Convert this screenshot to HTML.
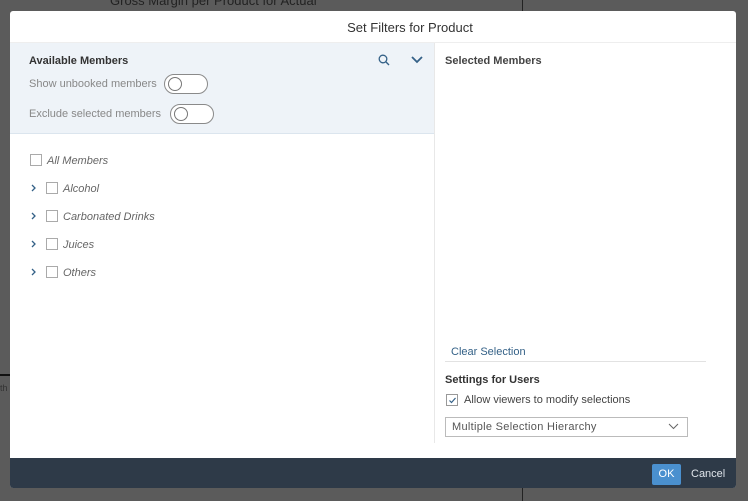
<!DOCTYPE html>
<html><head><meta charset="utf-8"><style>
*{margin:0;padding:0;box-sizing:border-box}
body{width:748px;height:501px;background:#5b5b5b;font-family:"Liberation Sans",sans-serif;position:relative;overflow:hidden}
.abs{position:absolute}
.dlg{left:10px;top:11px;width:726px;height:477px;background:#fff;border-radius:3px;overflow:hidden}
.cb{position:absolute;width:12px;height:12px;border:1px solid #aaa;background:#fff}
.row{position:absolute;font-size:11px;font-style:italic;color:#666}
.tog{position:absolute;width:44px;height:20px;border:1px solid #8a8a8a;border-radius:10px;background:#fff}
.tog:after{content:"";position:absolute;left:3px;top:2px;width:12px;height:12px;border:1.5px solid #777;border-radius:50%}
</style></head><body>
<div class="abs" style="left:110px;top:0;height:9px;overflow:hidden;font-size:13px;color:#222"><div style="margin-top:-7px">Gross Margin per Product for Actual</div></div>
<div class="abs" style="left:522px;top:0;width:1px;height:11px;background:#222"></div>
<div class="abs" style="left:522px;top:488px;width:1px;height:13px;background:#222"></div>
<div class="abs" style="left:0;top:374px;width:10px;height:2px;background:#111"></div>
<div class="abs" style="left:0;top:383px;font-size:9px;color:#333">th</div>
<div class="abs dlg">
 <div class="abs" style="left:0;width:726px;top:9px;text-align:center;font-size:13px;color:#333;padding-left:74px">Set Filters for Product</div>
 <div class="abs" style="left:0;top:31px;width:726px;height:1px;background:#eee"></div>
 <div class="abs" style="left:0;top:32px;width:424px;height:91px;background:#eef3f8;border-bottom:1px solid #dbe5ee"></div>
 <div class="abs" style="left:424px;top:32px;width:1px;height:400px;background:#e8e8e8"></div>
 <div class="abs" style="left:19px;top:44px;font-size:11px;font-weight:bold;color:#333">Available Members</div>
 <svg class="abs" style="left:368px;top:43px" width="12" height="12" viewBox="0 0 12 12"><circle cx="5" cy="5" r="3.8" fill="none" stroke="#346187" stroke-width="1.3"/><line x1="7.8" y1="7.8" x2="11" y2="11" stroke="#346187" stroke-width="1.4"/></svg>
 <svg class="abs" style="left:401px;top:44px" width="12" height="9" viewBox="0 0 12 9"><polyline points="1,2 6,7 11,2" fill="none" stroke="#346187" stroke-width="1.8"/></svg>
 <div class="abs" style="left:19px;top:67px;font-size:11px;color:#888">Show unbooked members</div>
 <div class="tog" style="left:154px;top:63px"></div>
 <div class="abs" style="left:19px;top:97px;font-size:11px;color:#888">Exclude selected members</div>
 <div class="tog" style="left:160px;top:93px"></div>
 <div class="cb" style="left:20px;top:143px"></div><div class="row" style="left:37px;top:144px">All Members</div>
 <svg class="abs" style="left:21px;top:173px" width="6" height="8" viewBox="0 0 6 8"><polyline points="1,1 4,4 1,7" fill="none" stroke="#346187" stroke-width="1.3"/></svg><div class="cb" style="left:36px;top:171px"></div><div class="row" style="left:53px;top:172px">Alcohol</div>
 <svg class="abs" style="left:21px;top:201px" width="6" height="8" viewBox="0 0 6 8"><polyline points="1,1 4,4 1,7" fill="none" stroke="#346187" stroke-width="1.3"/></svg><div class="cb" style="left:36px;top:199px"></div><div class="row" style="left:53px;top:200px">Carbonated Drinks</div>
 <svg class="abs" style="left:21px;top:229px" width="6" height="8" viewBox="0 0 6 8"><polyline points="1,1 4,4 1,7" fill="none" stroke="#346187" stroke-width="1.3"/></svg><div class="cb" style="left:36px;top:227px"></div><div class="row" style="left:53px;top:228px">Juices</div>
 <svg class="abs" style="left:21px;top:257px" width="6" height="8" viewBox="0 0 6 8"><polyline points="1,1 4,4 1,7" fill="none" stroke="#346187" stroke-width="1.3"/></svg><div class="cb" style="left:36px;top:255px"></div><div class="row" style="left:53px;top:256px">Others</div>
 <div class="abs" style="left:435px;top:44px;font-size:11px;font-weight:bold;color:#444">Selected Members</div>
 <div class="abs" style="left:441px;top:335px;font-size:11px;color:#346187">Clear Selection</div>
 <div class="abs" style="left:435px;top:350px;width:261px;height:1px;background:#e2e2e2"></div>
 <div class="abs" style="left:435px;top:363px;font-size:11px;font-weight:bold;color:#333">Settings for Users</div>
 <div class="cb" style="left:436px;top:383px;border-color:#999"><svg style="position:absolute;left:1px;top:1px" width="9" height="9" viewBox="0 0 9 9"><polyline points="1.5,4.5 3.5,6.5 7.5,2" fill="none" stroke="#346187" stroke-width="1.2"/></svg></div>
 <div class="abs" style="left:454px;top:383px;font-size:11px;color:#444">Allow viewers to modify selections</div>
 <div class="abs" style="left:435px;top:406px;width:243px;height:20px;border:1px solid #bbb;background:#fff"></div>
 <div class="abs" style="left:442px;top:410px;font-size:11px;color:#555;letter-spacing:0.3px">Multiple Selection Hierarchy</div>
 <svg class="abs" style="left:658px;top:412px" width="11" height="7" viewBox="0 0 11 7"><polyline points="1,1 5.5,5.5 10,1" fill="none" stroke="#666" stroke-width="1"/></svg>
 <div class="abs" style="left:0;top:447px;width:726px;height:30px;background:#2e3a48"></div>
 <div class="abs" style="left:642px;top:453px;width:29px;height:21px;background:#4a90cf;border-radius:2px;color:#fff;font-size:11px;text-align:center;line-height:21px">OK</div>
 <div class="abs" style="left:681px;top:457px;font-size:11px;color:#dfe4ea">Cancel</div>
</div>
</body></html>
